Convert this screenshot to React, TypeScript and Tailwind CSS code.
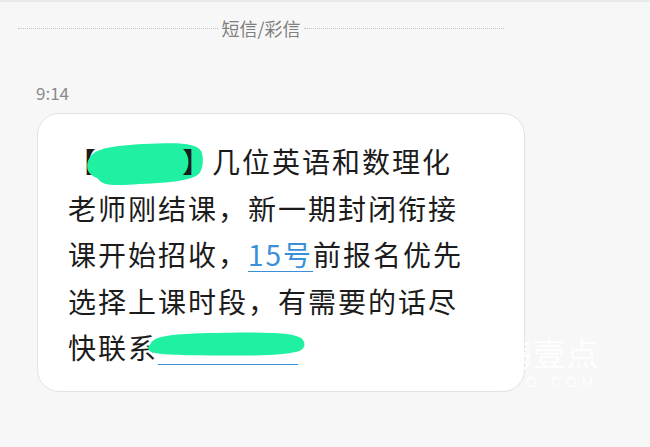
import React from 'react'

const cjk = { fontFamily: '"Noto Sans CJK SC", "Noto Sans", sans-serif' }

function Blob({ className, d }: { className: string; d: string }) {
  return (
    <svg className={className} viewBox="0 0 100 40" preserveAspectRatio="none" aria-hidden="true">
      <path d={d} fill="#1ff0a2" />
    </svg>
  )
}

export default function App() {
  return (
    <div className="relative h-[447px] w-[650px] overflow-hidden border-t-2 border-[#e9e9e9] bg-[#f7f7f7]" style={cjk}>
      {/* Divider */}
      <div className="flex items-center pl-[18px] pr-[146px] pt-[15px]">
        <div className="flex-1 border-t border-dotted border-[#c4c4c4]" />
        <span className="px-[3px] text-[18px] leading-[22px] text-[#7f7f7f]">短信/彩信</span>
        <div className="flex-1 border-t border-dotted border-[#c4c4c4]" />
      </div>

      <div className="pl-[36px] pt-[44px] text-[17px] leading-[20px] text-[#8a8a8a]">9:14</div>

      {/* Bubble */}
      <div className="ml-[37px] mt-[10px] w-[488px] rounded-[22px] border border-[#e2e2e2] bg-white pb-[20px] pl-[30px] pr-[20px] pt-[24px]">
        <p className="whitespace-nowrap text-[28px] leading-[46.5px] tracking-[2px] text-[#1c1c1c]">
          <span>【</span>
          <span className="relative inline-block h-[28px] w-[84px] align-middle">
            <Blob
              className="absolute left-[-12px] top-[-11px] h-[48px] w-[118px]"
              d="M4 14 C8 6 30 4 60 3 C80 2 95 3 98 10 C100 16 99 24 96 28 C90 34 70 36 40 37 C22 38 14 38 10 32 C6 30 1 28 1 22 C1 18 2 16 4 14 Z"
            />
          </span>
          <span className="relative z-10">】</span>
          <span>几位英语和数理化</span>
          <br />
          老师刚结课，新一期封闭衔接
          <br />
          课开始招收，<span className="text-[#3a8fd9] underline decoration-1 underline-offset-[5px]">15号</span>前报名优先
          <br />
          选择上课时段，有需要的话尽
          <br />
          快联系
          <span className="relative inline-block">
            <span className="text-transparent underline decoration-[#3a8fd9] decoration-1 underline-offset-[5px]">
              18888888
            </span>
            <Blob
              className="absolute left-[-14px] top-[5px] h-[30px] w-[162px]"
              d="M4 20 C6 8 20 6 50 5 C75 4 92 5 97 12 C100 18 100 26 95 30 C85 36 60 36 35 35 C18 35 8 34 4 30 C2 27 2 24 4 20 Z"
            />
          </span>
        </p>
      </div>

      {/* Watermark */}
      <div className="pointer-events-none absolute left-[500px] top-[332px] text-white opacity-90">
        <div className="text-[32px] leading-[36px] tracking-[1px]">嗨壹点</div>
        <div className="mt-[4px] pl-[26px] text-[14px] leading-[16px] tracking-[5px]" style={{ fontFamily: '"Liberation Sans", sans-serif' }}>
          O.COM
        </div>
      </div>
    </div>
  )
}
